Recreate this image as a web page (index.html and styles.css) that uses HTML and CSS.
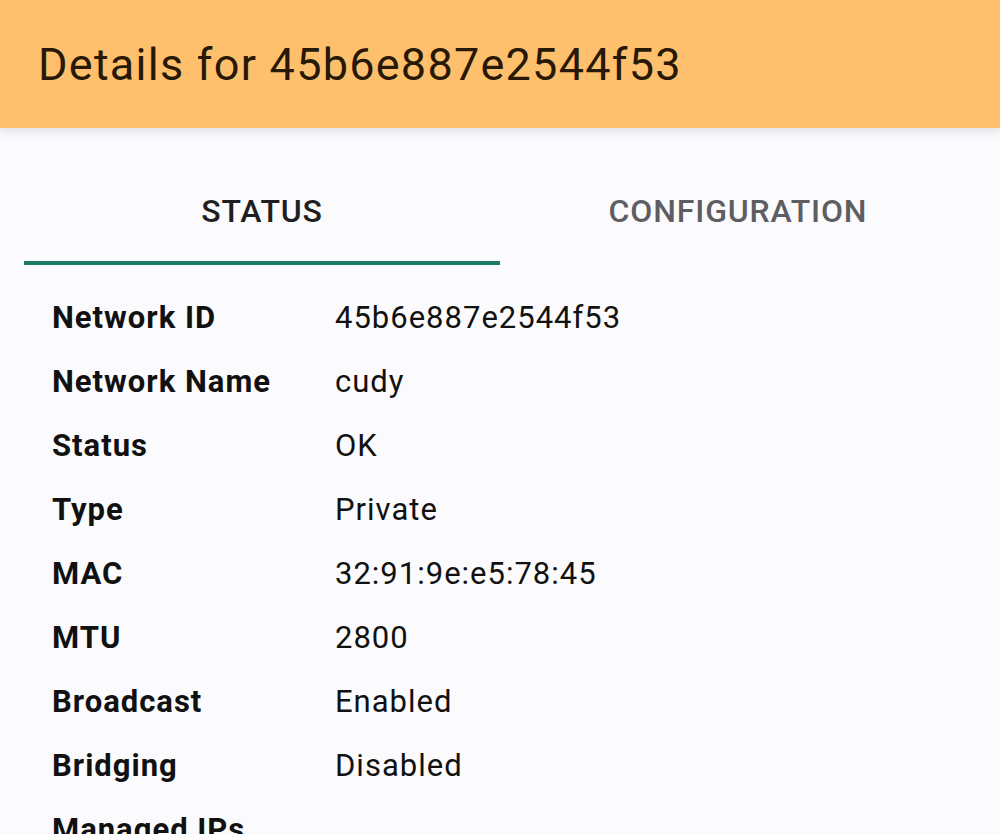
FILE: index.html
```html
<!DOCTYPE html>
<html>
<head>
<meta charset="utf-8">
<link rel="stylesheet" href="styles.css">
</head>
<body>
<header class="appbar">
  <h1 class="title">Details for 45b6e887e2544f53</h1>
</header>
<nav class="tabs">
  <div class="tab tab-active">STATUS</div>
  <div class="tab">CONFIGURATION</div>
</nav>
<section class="details">
  <div class="row"><div class="label">Network ID</div><div class="value">45b6e887e2544f53</div></div>
  <div class="row"><div class="label">Network Name</div><div class="value">cudy</div></div>
  <div class="row"><div class="label">Status</div><div class="value">OK</div></div>
  <div class="row"><div class="label">Type</div><div class="value">Private</div></div>
  <div class="row"><div class="label">MAC</div><div class="value">32:91:9e:e5:78:45</div></div>
  <div class="row"><div class="label">MTU</div><div class="value">2800</div></div>
  <div class="row"><div class="label">Broadcast</div><div class="value">Enabled</div></div>
  <div class="row"><div class="label">Bridging</div><div class="value">Disabled</div></div>
  <div class="row"><div class="label">Managed IPs</div><div class="value"></div></div>
</section>
</body>
</html>
```
FILE: styles.css
```css
html, body {
  margin: 0;
  padding: 0;
}
body {
  background: #fbfafc;
  font-family: Roboto, "Noto Sans", sans-serif;
  height: 834px;
  overflow: hidden;
}
.appbar {
  background: #ffc06e;
  height: 128px;
  box-sizing: border-box;
  padding: 37px 0 0 38px;
  box-shadow: 0 3px 10px rgba(0,0,0,0.12);
  position: relative;
  z-index: 1;
}
.title {
  margin: 0;
  font-size: 45px;
  line-height: 56px;
  font-weight: 400;
  letter-spacing: 1.25px;
  color: #281806;
}
.tabs {
  display: flex;
  margin: 0 24px;
}
.tab {
  flex: 1;
  text-align: center;
  font-size: 32px;
  line-height: 40px;
  font-weight: 500;
  letter-spacing: 0.85px;
  color: #5e5e62;
  padding: 63px 0 30px;
  border-bottom: 4px solid transparent;
}
.tab-active {
  color: #1f1f22;
  border-bottom-color: #1b7a63;
}
.details {
  padding: 21px 0 0 52px;
}
.row {
  display: flex;
  line-height: 64px;
  font-size: 31px;
  color: #111;
}
.label {
  width: 283px;
  font-weight: 700;
  letter-spacing: 1px;
}
.value {
  font-weight: 400;
  letter-spacing: 1px;
}
```
